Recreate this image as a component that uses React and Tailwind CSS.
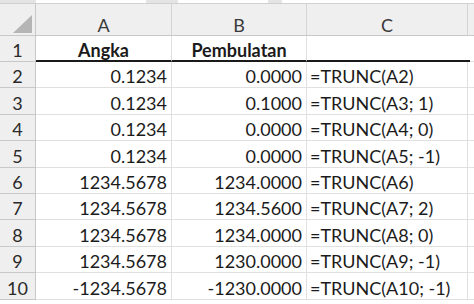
const rows = [
  ["1", "Angka", "Pembulatan", ""],
  ["2", "0.1234", "0.0000", "=TRUNC(A2)"],
  ["3", "0.1234", "0.1000", "=TRUNC(A3; 1)"],
  ["4", "0.1234", "0.0000", "=TRUNC(A4; 0)"],
  ["5", "0.1234", "0.0000", "=TRUNC(A5; -1)"],
  ["6", "1234.5678", "1234.0000", "=TRUNC(A6)"],
  ["7", "1234.5678", "1234.5600", "=TRUNC(A7; 2)"],
  ["8", "1234.5678", "1234.0000", "=TRUNC(A8; 0)"],
  ["9", "1234.5678", "1230.0000", "=TRUNC(A9; -1)"],
  ["10", "-1234.5678", "-1230.0000", "=TRUNC(A10; -1)"],
];

const heights = ["h-[26px]", "h-[26px]", "h-[27px]", "h-[26px]", "h-[27px]", "h-[26px]", "h-[26px]", "h-[27px]", "h-[26px]", "h-[27px]"];

export default function App() {
  return (
    <div
      className="w-[474px] h-[304px] overflow-hidden bg-white text-[#1b1b1b]"
      style={{ fontFamily: "Lato, 'Liberation Sans', sans-serif" }}
    >
      {/* remnant of the formula bar */}
      <div className="h-[4px] flex bg-[#e4e4e4] border-b border-[#d0d0d0]">
        <div className="w-[36px]" />
        <div className="w-[110px] bg-white" />
        <div className="w-[32px]" />
        <div className="w-[90px] bg-white" />
        <div className="w-[14px]" />
        <div className="flex-1 bg-white" />
      </div>

      {/* column headers */}
      <div className="h-[32px] flex bg-[#efefef] border-b border-[#c8c8c8] text-[#3a3a3a] text-[18px] leading-[18px]">
        <div className="w-[36px] shrink-0 border-r border-[#c8c8c8] relative">
          <svg className="absolute left-[13px] top-[11px]" width="19" height="18" viewBox="0 0 19 18">
            <polygon points="19,0 19,18 0,18" fill="#b5b5b5" />
          </svg>
        </div>
        <div className="w-[136px] shrink-0 border-r border-[#d4d4d4] flex items-end justify-center pb-[1px]">A</div>
        <div className="w-[135px] shrink-0 border-r border-[#d4d4d4] flex items-end justify-center pb-[1px]">B</div>
        <div className="w-[161px] shrink-0 border-r border-[#d4d4d4] flex items-end justify-center pb-[1px]">C</div>
        <div className="flex-1" />
      </div>

      {rows.map((r, i) => (
        <div key={r[0]} className={`flex text-[18px] leading-[18px] ${heights[i]}`}>
          <div className="w-[36px] shrink-0 bg-[#efefef] border-r border-b border-[#c8c8c8] flex items-end justify-center pb-[2px] text-[#2a2a2a]">
            {r[0]}
          </div>
          {i === 0 ? (
            <>
              <div className="w-[136px] shrink-0 border-r border-[#e0e0e0] border-b-2 border-b-[#1a1a1a] flex items-end justify-center pb-[1px] font-bold">
                {r[1]}
              </div>
              <div className="w-[135px] shrink-0 border-r border-[#e0e0e0] border-b-2 border-b-[#1a1a1a] flex items-end justify-center pb-[1px] font-bold">
                {r[2]}
              </div>
              <div className="w-[163px] shrink-0 border-b-2 border-b-[#1a1a1a]" />
            </>
          ) : (
            <>
              <div className="w-[136px] shrink-0 border-r border-b border-[#e0e0e0] flex items-end justify-end pr-[4px] pb-[2px]">
                {r[1]}
              </div>
              <div className="w-[135px] shrink-0 border-r border-b border-[#e0e0e0] flex items-end justify-end pr-[4px] pb-[2px]">
                {r[2]}
              </div>
              <div className="w-[161px] shrink-0 border-r border-b border-[#e0e0e0] flex items-end pl-[3px] pb-[2px] whitespace-nowrap">
                {r[3]}
              </div>
            </>
          )}
          <div className="flex-1 border-b border-[#e0e0e0]" />
        </div>
      ))}
    </div>
  );
}
